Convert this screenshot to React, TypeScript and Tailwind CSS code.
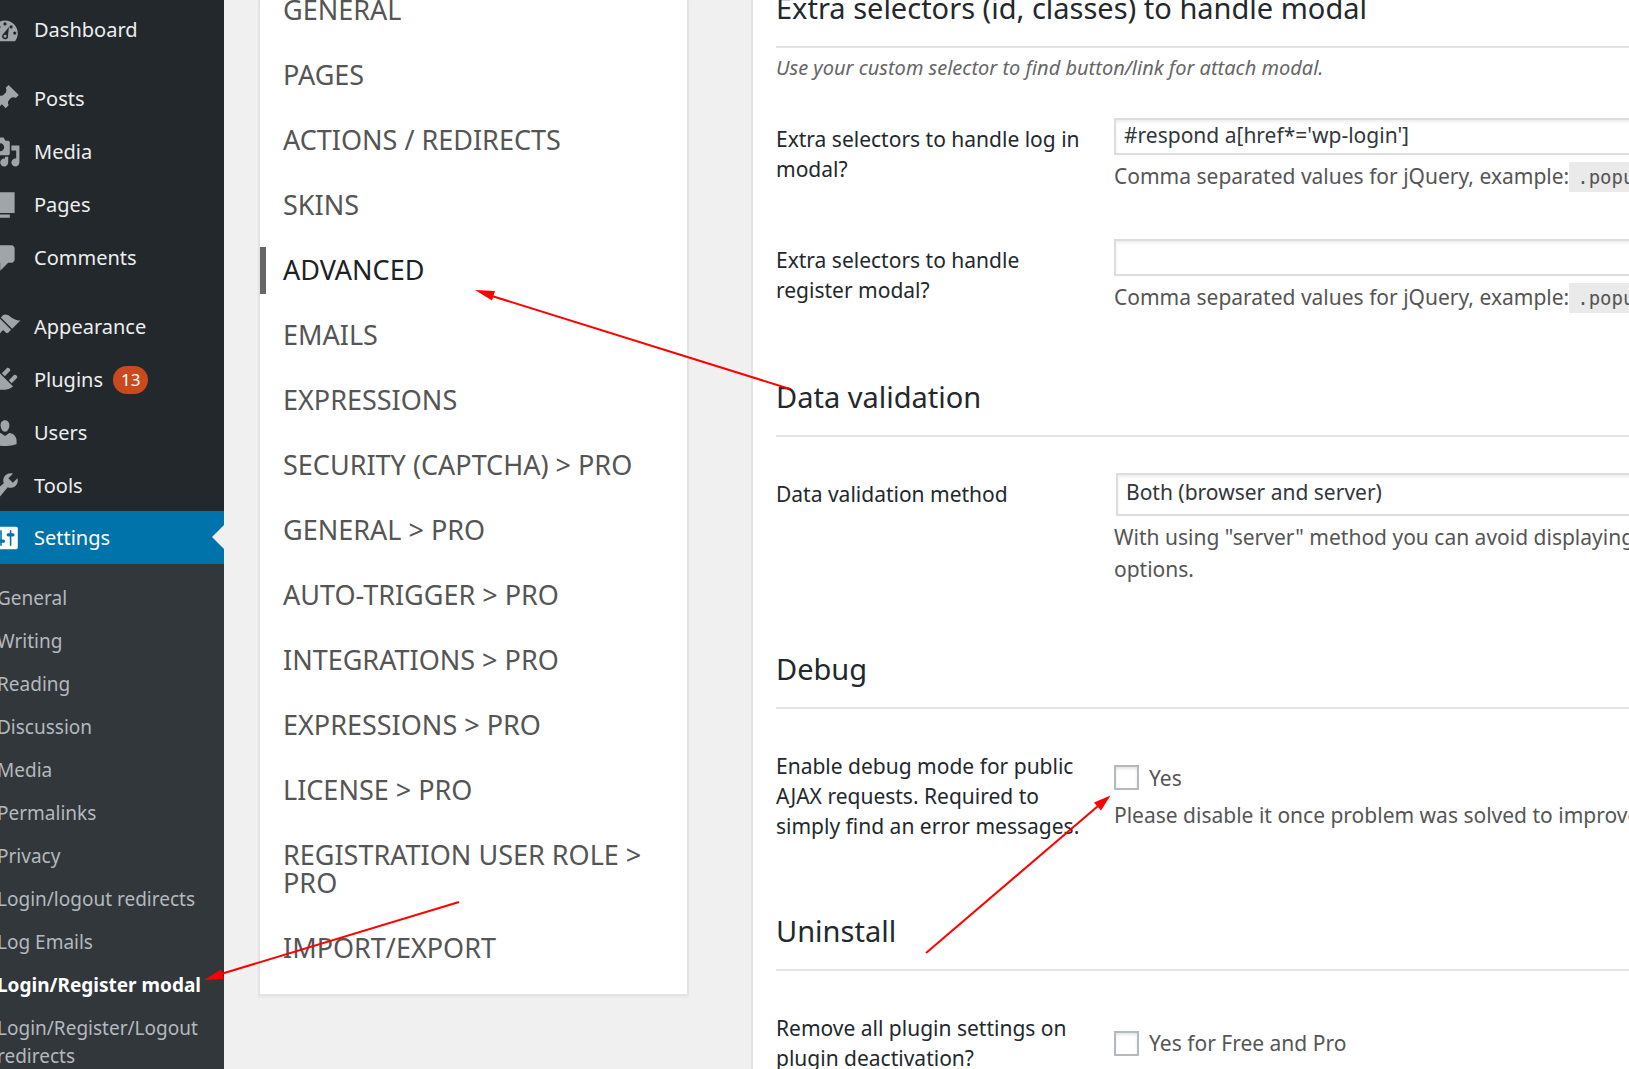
import type { ReactNode } from "react";

type MenuItem = { label: string; path: string; badge?: number; spaced?: boolean };

const MENU: MenuItem[] = [
  {
    label: "Dashboard",
    path: "M3.76 17h12.48c1.1-1.37 1.76-3.11 1.76-5 0-4.42-3.58-8-8-8s-8 3.58-8 8c0 1.89.66 3.63 1.76 5zM10 5.2a1 1 0 1 1 0 2 1 1 0 0 1 0-2zM6.2 7.1a1 1 0 1 1 0 2 1 1 0 0 1 0-2zM13.8 7.1a1 1 0 1 1 0 2 1 1 0 0 1 0-2zM4 10.9a1 1 0 1 1 0 2 1 1 0 0 1 0-2zM16.1 10.9a1 1 0 1 1 0 2 1 1 0 0 1 0-2zM12.5 8.2L11.9 13.2c.3 1.7-.6 2.6-1.8 2.6-1.2 0-2-.9-1.9-2 .05-.6.4-1.1.8-1.5zM10.1 13a.9.9 0 1 0 0 1.8.9.9 0 0 0 0-1.8z",
  },
  {
    label: "Posts",
    spaced: true,
    path: "M10.44 3.02l1.82-1.82 6.36 6.35-1.83 1.82c-1.05-.68-2.48-.57-3.41.36l-.75.75c-.92.93-1.04 2.35-.35 3.41l-1.83 1.82-2.41-2.41-2.8 2.79c-.42.42-3.38 2.71-3.8 2.29s1.86-3.39 2.28-3.81l2.79-2.79L4.1 9.36l1.83-1.82c1.05.69 2.48.57 3.4-.36l.75-.75c.93-.92 1.05-2.35.36-3.41z",
  },
  {
    label: "Media",
    path: "M13 11V4c0-.55-.45-1-1-1h-1.67L9 1H5L3.67 3H2c-.55 0-1 .45-1 1v7c0 .55.45 1 1 1h10c.55 0 1-.45 1-1zM7 4.5c1.38 0 2.5 1.12 2.5 2.5S8.38 9.5 7 9.5 4.5 8.38 4.5 7 5.62 4.5 7 4.5zM14 6h5v10.5c0 1.38-1.12 2.5-2.5 2.5S14 17.88 14 16.5s1.12-2.5 2.5-2.5c.17 0 .34.02.5.05V9h-3V6zm-4 8.05V13h2v3.5c0 1.38-1.12 2.5-2.5 2.5S7 17.88 7 16.5 8.12 14 9.5 14c.17 0 .34.02.5.05z",
  },
  { label: "Pages", path: "M6 15V2h10v13H6zm-1 1h8v2H3V5h2v11z" },
  {
    label: "Comments",
    path: "M5 2h9c1.1 0 2 .9 2 2v7c0 1.1-.9 2-2 2h-2l-5 5v-5H5c-1.1 0-2-.9-2-2V4c0-1.1.9-2 2-2z",
  },
  {
    label: "Appearance",
    spaced: true,
    path: "M14.48 11.06L7.41 3.99l1.5-1.5c.5-.56 2.3-.47 3.51.32 1.21.8 1.43 1.28 2.91 2.1 1.18.64 2.45 1.26 4.45.85zm-.71.71L6.7 4.7 4.93 6.47c-.39.39-.39 1.02 0 1.41l1.06 1.06c.39.39.39 1.03 0 1.42-.6.6-1.43 1.11-2.21 1.69-.35.26-.7.53-1.01.84C1.43 14.23.4 16.08 1.4 17.07c.99 1 2.84-.03 4.18-1.36.31-.31.58-.66.85-1.02.57-.78 1.08-1.61 1.69-2.21.39-.39 1.02-.39 1.41 0l1.06 1.06c.39.39 1.02.39 1.41 0z",
  },
  {
    label: "Plugins",
    badge: 13,
    path: "M13.11 4.36L9.87 7.6 8 5.73l3.24-3.24c.35-.34 1.05-.2 1.56.32.52.51.66 1.21.31 1.55zm-8 1.77l.91-1.12 9.01 9.01-1.19.84c-.71.71-2.63 1.16-3.82 1.16H6.14L4.9 17.26c-.59.59-1.54.59-2.12 0-.59-.58-.59-1.53 0-2.12l1.24-1.24v-3.88c0-1.13.4-3.19 1.09-3.89zm7.26 3.97l3.24-3.24c.34-.35 1.04-.21 1.55.31.52.51.66 1.21.31 1.55l-3.24 3.25z",
  },
  {
    label: "Users",
    path: "M10 9.25c-2.27 0-2.73-3.44-2.73-3.44C7 4.02 7.82 2 9.97 2c2.16 0 2.98 2.02 2.71 3.81 0 0-.41 3.44-2.68 3.44zm0 2.57L12.72 10c2.39 0 4.52 2.33 4.52 4.53v2.49s-3.65 1.13-7.24 1.13c-3.65 0-7.24-1.13-7.24-1.13v-2.49c0-2.25 1.94-4.48 4.47-4.48z",
  },
  {
    label: "Tools",
    path: "M16.68 9.77c-1.34 1.34-3.3 1.67-4.95.99l-5.41 6.52c-.99.99-2.59.99-3.58 0s-.99-2.59 0-3.57l6.52-5.42c-.68-1.65-.35-3.61.99-4.95 1.28-1.28 3.12-1.62 4.72-1.06l-2.89 2.89 2.82 2.82 2.86-2.87c.53 1.58.18 3.39-1.08 4.65zM3.81 16.21c.4.39 1.04.39 1.43 0 .4-.4.4-1.04 0-1.43-.39-.4-1.03-.4-1.43 0-.39.39-.39 1.03 0 1.43z",
  },
];

const SETTINGS_PATH =
  "M18 16V4c0-.55-.45-1-1-1H3c-.55 0-1 .45-1 1v12c0 .55.45 1 1 1h14c.55 0 1-.45 1-1zM8 11h1c.55 0 1 .45 1 1s-.45 1-1 1H8v1.5c0 .28-.22.5-.5.5s-.5-.22-.5-.5V13H6c-.55 0-1-.45-1-1s.45-1 1-1h1V5.5c0-.28.22-.5.5-.5s.5.22.5.5V11zm5-2h-1c-.55 0-1-.45-1-1s.45-1 1-1h1V5.5c0-.28.22-.5.5-.5s.5.22.5.5V7h1c.55 0 1 .45 1 1s-.45 1-1 1h-1v5.5c0 .28-.22.5-.5.5s-.5-.22-.5-.5V9z";

const SUBMENU = [
  "General",
  "Writing",
  "Reading",
  "Discussion",
  "Media",
  "Permalinks",
  "Privacy",
  "Login/logout redirects",
  "Log Emails",
  "Login/Register modal",
  "Login/Register/Logout redirects",
];

const TABS = [
  "GENERAL",
  "PAGES",
  "ACTIONS / REDIRECTS",
  "SKINS",
  "ADVANCED",
  "EMAILS",
  "EXPRESSIONS",
  "SECURITY (CAPTCHA) > PRO",
  "GENERAL > PRO",
  "AUTO-TRIGGER > PRO",
  "INTEGRATIONS > PRO",
  "EXPRESSIONS > PRO",
  "LICENSE > PRO",
  "REGISTRATION USER ROLE > PRO",
  "IMPORT/EXPORT",
];

function MenuIcon({ path, className }: { path: string; className: string }) {
  return (
    <svg viewBox="0 0 20 20" className={`size-8 shrink-0 ${className}`} fill="currentColor" fillRule="evenodd" aria-hidden="true">
      <path d={path} />
    </svg>
  );
}

function Sidebar() {
  return (
    <nav aria-label="Admin menu" className="w-[224px] shrink-0 overflow-hidden bg-[#23282d] pt-0.5">
      <ul>
        {MENU.map((item) => (
          <li key={item.label} className={item.spaced ? "mt-4" : ""}>
            <a href="#" className="-ml-[11px] flex h-[53px] items-center gap-[13px] pt-0.5 text-xl text-[#eee]">
              <MenuIcon path={item.path} className="text-[#a0a5aa]" />
              <span className="flex items-center gap-2.5">
                {item.label}
                {item.badge && (
                  <span className="rounded-full bg-[#ca4a1f] px-2 text-[17px] leading-7 text-white">{item.badge}</span>
                )}
              </span>
            </a>
          </li>
        ))}
        <li>
          <a href="#" className="relative flex h-[53px] items-center bg-[#0073aa] text-xl text-white">
            <span className="-ml-[11px] flex items-center gap-[13px]">
              <MenuIcon path={SETTINGS_PATH} className="text-white" />
              Settings
            </span>
            <span className="absolute top-3.5 right-0 border-y-12 border-r-12 border-y-transparent border-r-[#f0f0f0]" />
          </a>
          <ul className="min-h-screen bg-[#32373c] pt-3">
            {SUBMENU.map((label) => (
              <li key={label}>
                <a
                  href="#"
                  className={`-ml-[3px] block pt-2 pr-4 pb-[7px] text-[19px] leading-7 ${
                    label === "Login/Register modal" ? "font-bold whitespace-nowrap text-white" : "text-[#b4b9be]"
                  }`}
                >
                  {label}
                </a>
              </li>
            ))}
          </ul>
        </li>
      </ul>
    </nav>
  );
}

function Tabs() {
  return (
    <nav
      aria-label="Plugin sections"
      className="w-[431px] shrink-0 self-start border-2 border-t-0 border-[#e3e3e3] bg-white pb-[22px] shadow-[0_2px_2px_rgba(0,0,0,0.03)]"
    >
      <ul className="-mt-[13px] flex flex-col gap-[18px]">
        {TABS.map((tab) => (
          <li key={tab}>
            <a
              href="#"
              className={`block border-l-6 pt-[9px] pr-4 pb-2.5 pl-[17px] text-[27px] leading-7 ${
                tab === "ADVANCED" ? "border-[#666] text-[#1d2125]" : "border-transparent text-[#555]"
              }`}
            >
              {tab}
            </a>
          </li>
        ))}
      </ul>
    </nav>
  );
}

function Section({ title, note, children }: { title: string; note?: string; children: ReactNode }) {
  return (
    <section className="mb-[66px]">
      <h2 className="border-b-2 border-[#e3e3e3] pb-5 text-[29px] leading-9 text-[#23282d]">{title}</h2>
      {note && <p className="pt-1.5 text-xl leading-7 text-[#666] italic">{note}</p>}
      <div className="flex flex-col gap-[47px] pt-9">{children}</div>
    </section>
  );
}

function Row({ id, label, children }: { id: string; label: string; children: ReactNode }) {
  return (
    <div className="grid grid-cols-[338px_1fr] items-center text-[21px]">
      <label htmlFor={id} className="self-start py-1.5 pr-6 leading-[30px] text-[#23282d]">
        {label}
      </label>
      <div className="min-w-0">{children}</div>
    </div>
  );
}

function Help({ children }: { children: ReactNode }) {
  return <p className="mt-[5px] leading-8 whitespace-nowrap text-[#555]">{children}</p>;
}

function SelectorField({ id, label, value }: { id: string; label: string; value: string }) {
  return (
    <Row id={id} label={label}>
      <input
        id={id}
        type="text"
        defaultValue={value}
        className="block h-[37px] w-full border-2 border-[#ddd] bg-white px-2 pb-[3px] text-[#32373c] shadow-[inset_0_2px_3px_rgba(0,0,0,0.07)] outline-none"
      />
      <Help>
        Comma separated values for jQuery, example:
        <code className="bg-[#eaeaea] px-2 py-1 font-['DejaVu_Sans_Mono',monospace] text-[19px] leading-none">.popup</code>
      </Help>
    </Row>
  );
}

function CheckField({ id, text }: { id: string; text: string }) {
  return (
    <span className="flex items-center gap-2.5 leading-8 text-[#555]">
      <input
        id={id}
        type="checkbox"
        className="size-[25px] appearance-none border-2 border-[#b4b9be] bg-white shadow-[inset_0_2px_3px_rgba(0,0,0,0.1)]"
      />
      <label htmlFor={id}>{text}</label>
    </span>
  );
}

function Panel() {
  return (
    <main className="-mr-8 min-w-0 flex-1 border-l-2 border-[#e3e3e3] bg-white pl-[23px]">
      <div className="-mt-2.5">
        <Section
          title="Extra selectors (id, classes) to handle modal"
          note="Use your custom selector to find button/link for attach modal."
        >
          <SelectorField id="login-selectors" label="Extra selectors to handle log in modal?" value="#respond a[href*='wp-login']" />
          <SelectorField id="register-selectors" label="Extra selectors to handle register modal?" value="" />
        </Section>
        <Section title="Data validation">
          <Row id="validation" label="Data validation method">
            <select
              id="validation"
              className="ml-0.5 block h-[43px] w-full appearance-none border-2 border-[#ddd] bg-white px-2 pb-[3px] text-[#32373c] shadow-[inset_0_2px_3px_rgba(0,0,0,0.07)]"
            >
              <option>Both (browser and server)</option>
            </select>
            <Help>
              With using "server" method you can avoid displaying
              <br />
              options.
            </Help>
          </Row>
        </Section>
        <Section title="Debug">
          <Row id="debug" label="Enable debug mode for public AJAX requests. Required to simply find an error messages.">
            <CheckField id="debug" text="Yes" />
            <Help>Please disable it once problem was solved to improve</Help>
          </Row>
        </Section>
        <Section title="Uninstall">
          <Row id="uninstall" label="Remove all plugin settings on plugin deactivation?">
            <CheckField id="uninstall" text="Yes for Free and Pro" />
          </Row>
        </Section>
      </div>
    </main>
  );
}

/** Hand-drawn pointers laid over the page. */
function Arrows() {
  return (
    <svg className="pointer-events-none absolute top-0 left-0" width="1629" height="1069" fill="red" stroke="red" aria-hidden="true">
      <g strokeWidth="2">
        <path d="M790 389L492 296" />
        <path d="M459 902L221 974" />
        <path d="M926 953L1098 806" />
      </g>
      <g stroke="none">
        <path d="M475 290L495 291L492 300.500Z" />
        <path d="M204 980L221 969.500L224 979Z" />
        <path d="M1110.500 795.500L1094 802.500L1101 810.500Z" />
      </g>
    </svg>
  );
}

export default function App() {
  return (
    <div className="relative flex h-screen overflow-hidden bg-[#f0f0f0] font-['Noto_Sans',sans-serif]">
      <Sidebar />
      <div className="ml-[34px] flex min-w-0 flex-1 gap-[62px]">
        <Tabs />
        <Panel />
      </div>
      <Arrows />
    </div>
  );
}
